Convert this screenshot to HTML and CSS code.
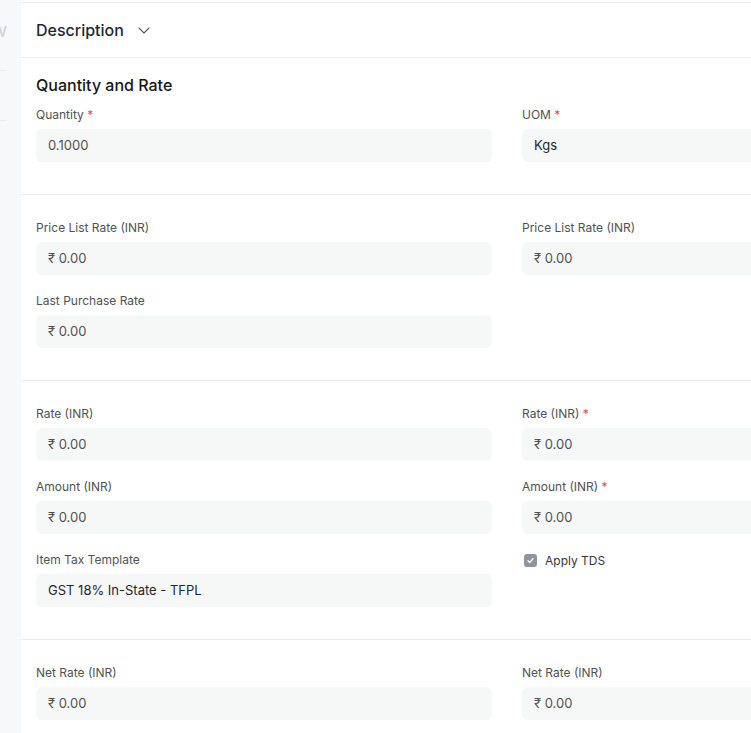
FILE: index.html
```html
<!DOCTYPE html>
<html>
<head>
<meta charset="utf-8">
<link rel="stylesheet" href="styles.css">
</head>
<body>
<div class="page">
  <div class="strip">
    <span class="ghost">w</span>
    <div class="ghost-rule r1"></div>
    <div class="ghost-rule r2"></div>
  </div>
  <div class="card">
    <section class="sec sec-collapsed">
      <div class="sec-head">
        <span class="title">Description</span>
        <svg class="chev" width="12" height="7" viewBox="0 0 12 7"><path d="M1 1 L6 6 L11 1" fill="none" stroke="#5b5b5b" stroke-width="1.1" stroke-linecap="round" stroke-linejoin="round"/></svg>
      </div>
    </section>

    <section class="sec sec-first">
      <div class="sec-title">Quantity and Rate</div>
      <div class="grid">
        <div class="col">
          <div class="field">
            <div class="label">Quantity <span class="req">*</span></div>
            <div class="input muted">0.1000</div>
          </div>
        </div>
        <div class="col">
          <div class="field">
            <div class="label">UOM <span class="req">*</span></div>
            <div class="input">Kgs</div>
          </div>
        </div>
      </div>
    </section>

    <section class="sec">
      <div class="grid">
        <div class="col">
          <div class="field">
            <div class="label">Price List Rate (INR)</div>
            <div class="input muted">₹ 0.00</div>
          </div>
          <div class="field">
            <div class="label">Last Purchase Rate</div>
            <div class="input muted">₹ 0.00</div>
          </div>
        </div>
        <div class="col">
          <div class="field">
            <div class="label">Price List Rate (INR)</div>
            <div class="input muted">₹ 0.00</div>
          </div>
        </div>
      </div>
    </section>

    <section class="sec">
      <div class="grid">
        <div class="col">
          <div class="field">
            <div class="label">Rate (INR)</div>
            <div class="input muted">₹ 0.00</div>
          </div>
          <div class="field">
            <div class="label">Amount (INR)</div>
            <div class="input muted">₹ 0.00</div>
          </div>
          <div class="field">
            <div class="label">Item Tax Template</div>
            <div class="input">GST 18% In-State - TFPL</div>
          </div>
        </div>
        <div class="col">
          <div class="field">
            <div class="label">Rate (INR) <span class="req">*</span></div>
            <div class="input muted">₹ 0.00</div>
          </div>
          <div class="field">
            <div class="label">Amount (INR) <span class="req">*</span></div>
            <div class="input muted">₹ 0.00</div>
          </div>
          <div class="check">
            <span class="box"><svg width="9" height="9" viewBox="0 0 9 9"><path d="M2 4.7 L3.8 6.4 L7 2.8" fill="none" stroke="#fff" stroke-width="1.4" stroke-linecap="round" stroke-linejoin="round"/></svg></span>
            <span class="check-label">Apply TDS</span>
          </div>
        </div>
      </div>
    </section>

    <section class="sec">
      <div class="grid">
        <div class="col">
          <div class="field">
            <div class="label">Net Rate (INR)</div>
            <div class="input muted">₹ 0.00</div>
          </div>
        </div>
        <div class="col">
          <div class="field">
            <div class="label">Net Rate (INR)</div>
            <div class="input muted">₹ 0.00</div>
          </div>
        </div>
      </div>
    </section>
  </div>
</div>
</body>
</html>
```

FILE: styles.css
```css
html, body {
  margin: 0;
  padding: 0;
  background: #ffffff;
  overflow: hidden;
}
body {
  font-family: Inter, "Noto Sans", sans-serif;
  color: #1f272e;
  -webkit-font-smoothing: antialiased;
}
.page {
  display: flex;
  width: 751px;
  height: 733px;
  overflow: hidden;
}
.strip {
  width: 21px;
  flex-shrink: 0;
  background: #f7f8f9;
  position: relative;
  overflow: hidden;
}
.ghost {
  position: absolute;
  left: -9px;
  top: 18px;
  font-size: 20px;
  color: #cfd2d5;
  line-height: 24px;
}
.ghost-rule {
  position: absolute;
  left: 0;
  width: 7px;
  height: 1px;
  background: #eaebec;
}
.r1 { top: 70px; }
.r2 { top: 120px; }
.card {
  flex-shrink: 0;
  width: 980px;
  padding-top: 2px;
  background: #ffffff;
}
.sec {
  border-top: 1px solid #ededed;
  padding: 23px 15px 16px;
}
.sec-collapsed {
  padding: 17px 15px;
}
.sec-first {
  padding-bottom: 16px;
}
.sec-head {
  display: flex;
  align-items: center;
  height: 20px;
}
.title {
  font-size: 16px;
  line-height: 20px;
  font-weight: 500;
  color: #1f272e;
}
.chev {
  margin-left: 14px;
  margin-top: 1px;
}
.sec-title {
  font-size: 16px;
  line-height: 20px;
  font-weight: 500;
  color: #171717;
  margin-top: -6px;
  margin-bottom: 10px;
}
.grid {
  display: grid;
  grid-template-columns: 456px 456px;
  column-gap: 30px;
}
.field {
  margin-bottom: 16px;
}
.label {
  font-size: 12px;
  line-height: 18px;
  padding-top: 1px;
  color: #525252;
  margin-bottom: 5px;
}
.req {
  color: #e24c4c;
}
.input {
  height: 33px;
  box-sizing: border-box;
  background: #f6f7f7;
  border-radius: 6px;
  padding: 0 12px 2px;
  display: flex;
  align-items: center;
  font-size: 13px;
  color: #1f272e;
}
.input.muted {
  color: #525252;
}
.check {
  display: flex;
  align-items: center;
  height: 20px;
}
.box {
  width: 13px;
  height: 13px;
  border-radius: 3px;
  background: #8d959e;
  display: flex;
  align-items: center;
  justify-content: center;
  margin-left: 2px;
}
.check-label {
  margin-left: 8px;
  font-size: 12px;
  color: #383838;
}
```
